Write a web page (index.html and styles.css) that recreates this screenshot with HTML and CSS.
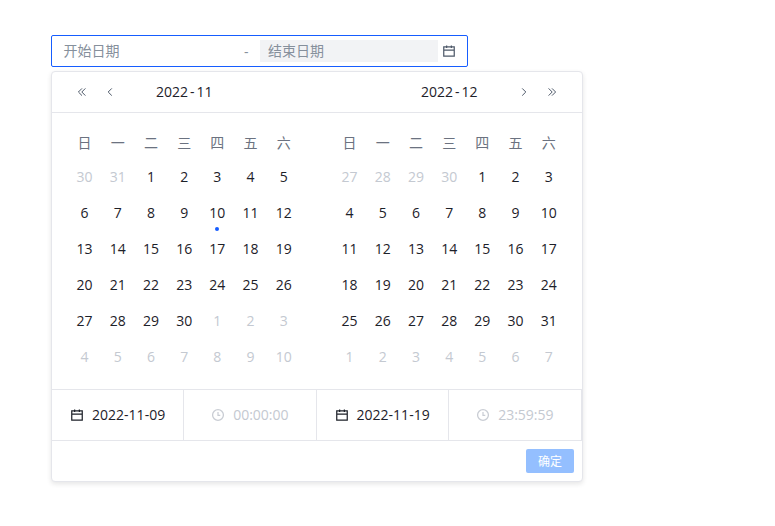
FILE: index.html
```html
<!DOCTYPE html>
<html lang="zh">
<head>
<meta charset="utf-8">
<title>日期范围选择</title>
<link rel="stylesheet" href="styles.css">
</head>
<body>
<svg class="defs" width="0" height="0" aria-hidden="true">
  <symbol id="cal" viewBox="0 0 16 16"><path d="M2 3.4h12v10.4H2zM2 7h12M5.3 1.6v3M10.7 1.6v3" fill="none" stroke="currentColor" stroke-width="1.4"/></symbol>
  <symbol id="clock" viewBox="0 0 16 16"><circle cx="8" cy="8" r="6.2" fill="none" stroke="currentColor" stroke-width="1.5"/><path d="M8 4.6V8.4h2.6" fill="none" stroke="currentColor" stroke-width="1.4"/></symbol>
  <symbol id="left" viewBox="0 0 12 12"><path d="M7.8 2.4 4.2 6l3.6 3.6" fill="none" stroke="currentColor" stroke-width="1"/></symbol>
  <symbol id="right" viewBox="0 0 12 12"><path d="M4.2 2.4 7.8 6l-3.6 3.6" fill="none" stroke="currentColor" stroke-width="1"/></symbol>
  <symbol id="dleft" viewBox="0 0 12 12"><path d="M6 2.4 2.4 6 6 9.6M9.4 2.4 5.8 6l3.6 3.6" fill="none" stroke="currentColor" stroke-width="1"/></symbol>
  <symbol id="dright" viewBox="0 0 12 12"><path d="M2.6 2.4 6.2 6l-3.6 3.6M6 2.4 9.6 6 6 9.6" fill="none" stroke="currentColor" stroke-width="1"/></symbol>
</svg>
<div class="picker">
  <div class="range-input">
    <span class="field start">开始日期</span>
    <span class="sep">-</span>
    <span class="field end">结束日期</span>
    <svg class="input-icon"><use href="#cal"/></svg>
  </div>
  <div class="panel">
    <div class="calendars">
      <section class="month">
        <header class="month-head">
          <svg class="nav"><use href="#dleft"/></svg>
          <svg class="nav"><use href="#left"/></svg>
          <span class="title left-title">2022<span class="dash">-</span>11</span>
        </header>
        <div class="grid">
          <span class="wk">日</span><span class="wk">一</span><span class="wk">二</span><span class="wk">三</span><span class="wk">四</span><span class="wk">五</span><span class="wk">六</span>
          <span class="off">30</span><span class="off">31</span><span>1</span><span>2</span><span>3</span><span>4</span><span>5</span>
          <span>6</span><span>7</span><span>8</span><span>9</span><span class="today">10</span><span>11</span><span>12</span>
          <span>13</span><span>14</span><span>15</span><span>16</span><span>17</span><span>18</span><span>19</span>
          <span>20</span><span>21</span><span>22</span><span>23</span><span>24</span><span>25</span><span>26</span>
          <span>27</span><span>28</span><span>29</span><span>30</span><span class="off">1</span><span class="off">2</span><span class="off">3</span>
          <span class="off">4</span><span class="off">5</span><span class="off">6</span><span class="off">7</span><span class="off">8</span><span class="off">9</span><span class="off">10</span>
        </div>
      </section>
      <section class="month">
        <header class="month-head">
          <span class="title right-title">2022<span class="dash">-</span>12</span>
          <svg class="nav"><use href="#right"/></svg>
          <svg class="nav"><use href="#dright"/></svg>
        </header>
        <div class="grid">
          <span class="wk">日</span><span class="wk">一</span><span class="wk">二</span><span class="wk">三</span><span class="wk">四</span><span class="wk">五</span><span class="wk">六</span>
          <span class="off">27</span><span class="off">28</span><span class="off">29</span><span class="off">30</span><span>1</span><span>2</span><span>3</span>
          <span>4</span><span>5</span><span>6</span><span>7</span><span>8</span><span>9</span><span>10</span>
          <span>11</span><span>12</span><span>13</span><span>14</span><span>15</span><span>16</span><span>17</span>
          <span>18</span><span>19</span><span>20</span><span>21</span><span>22</span><span>23</span><span>24</span>
          <span>25</span><span>26</span><span>27</span><span>28</span><span>29</span><span>30</span><span>31</span>
          <span class="off">1</span><span class="off">2</span><span class="off">3</span><span class="off">4</span><span class="off">5</span><span class="off">6</span><span class="off">7</span>
        </div>
      </section>
    </div>
    <div class="times">
      <div class="cell"><svg class="cell-icon"><use href="#cal"/></svg>2022-11-09</div>
      <div class="cell muted"><svg class="cell-icon"><use href="#clock"/></svg>00:00:00</div>
      <div class="cell"><svg class="cell-icon"><use href="#cal"/></svg>2022-11-19</div>
      <div class="cell muted"><svg class="cell-icon"><use href="#clock"/></svg>23:59:59</div>
    </div>
    <div class="actions"><button class="ok" type="button">确定</button></div>
  </div>
</div>
</body>
</html>
```

FILE: styles.css
```css
* { box-sizing: border-box; }
html, body { margin: 0; height: 100%; background: #fff; }
body {
  padding: 35px 0 0 51px;
  font-family: "Open Sans", "Noto Sans CJK SC", sans-serif;
  font-size: 14px;
  color: #1d2129;
  overflow: hidden;
}
.defs { position: absolute; }
.picker { width: 532px; }

.range-input {
  display: flex;
  align-items: center;
  width: 417px;
  height: 32px;
  padding: 0 7px 0 3px;
  border: 1px solid #165dff;
  border-radius: 2px;
}
.field {
  display: block;
  height: 22px;
  line-height: 22px;
  padding-left: 8px;
  color: #86909c;
}
.start { width: 186px; padding-left: 8.5px; }
.sep { width: 22px; text-align: left; padding-left: 3px; color: #86909c; }
.end { width: 178px; background: #f2f3f5; margin-left: -3px; }
.input-icon { width: 14px; height: 14px; margin-left: 3.5px; color: #4e5969; }

.panel {
  width: 532px;
  height: 411px;
  margin-top: 4px;
  border: 1px solid #e5e6eb;
  border-radius: 4px;
  background: #fff;
  box-shadow: 0 2px 5px rgba(0, 0, 0, .1);
}
.calendars { display: flex; height: 317px; }
.month { width: 265px; }
.month-head {
  display: flex;
  align-items: center;
  height: 41px;
  padding: 0 24px;
  border-bottom: 1px solid #e5e6eb;
}
.nav { width: 12px; height: 12px; color: #4e5969; margin-right: 16px; flex: none; }
.month-head .nav:last-child { margin-right: 0; }
.left-title { margin-left: 24px; }
.right-title { margin-left: auto; margin-right: 40.5px; }
.title { white-space: nowrap; margin-bottom: 2px; }
.dash { margin: 0 2px; }

.grid {
  display: grid;
  grid-template-columns: repeat(7, 33.2px);
  grid-template-rows: 34px;
  grid-auto-rows: 36px;
  padding: 13px 16px 0;
  text-align: center;
  line-height: 34px;
}
.grid span { position: relative; display: block; height: 36px; }
.grid .wk { height: 34px; line-height: 34px; color: #6b7280; }
.off { color: #c4c9d1; }
.today::after {
  content: "";
  position: absolute;
  left: 50%;
  bottom: 1px;
  width: 4px;
  height: 4px;
  margin-left: -2px;
  border-radius: 50%;
  background: #165dff;
}

.times {
  display: grid;
  grid-template-columns: repeat(3, 132.25px) 1fr;
  height: 52px;
  border-top: 1px solid #e5e6eb;
  border-bottom: 1px solid #e5e6eb;
}
.cell {
  display: flex;
  align-items: center;
  justify-content: center;
  gap: 8px;
  padding-bottom: 2px;
  border-right: 1px solid #e5e6eb;
}
.cell-icon { width: 14px; height: 14px; margin-top: 2px; color: #1d2129; }
.muted { color: #c4c9d1; }
.muted .cell-icon { color: #c9cdd4; }

.actions { display: flex; justify-content: flex-end; padding: 8px 8px 0 0; }
.ok {
  width: 48px;
  height: 24px;
  border: 0;
  border-radius: 2px;
  background: #94bfff;
  color: #fff;
  font: 12px "Open Sans", "Noto Sans CJK SC", sans-serif;
  padding: 0;
}
```
